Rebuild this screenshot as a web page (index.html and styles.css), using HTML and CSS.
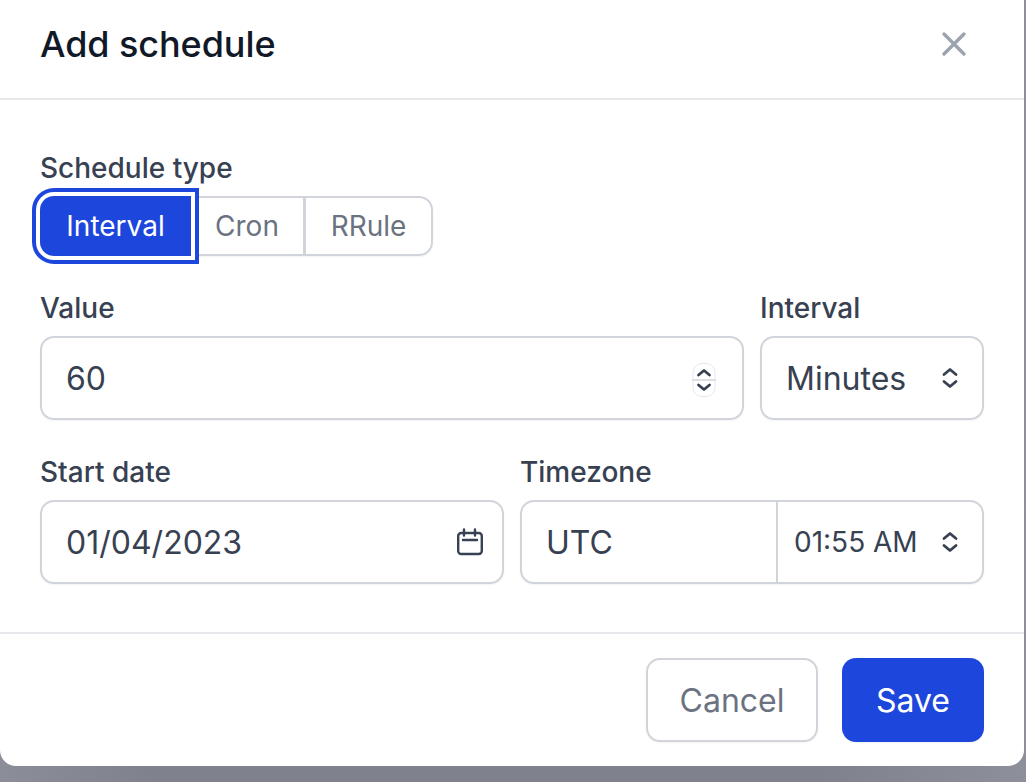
FILE: index.html
```html
<!DOCTYPE html>
<html lang="en">
<head>
    <meta charset="UTF-8">
    <meta name="viewport" content="width=device-width, initial-scale=1.0">
    <title>Add schedule</title>
    <link rel="stylesheet" href="styles.css">
</head>
<body>

<div class="modal">
    <div class="modal-header">
        <h2>Add schedule</h2>
        <button class="close-btn" aria-label="Close">
            <svg width="28" height="28" viewBox="0 0 28 28" fill="none" stroke="#9ca3af" stroke-width="3.4" stroke-linecap="round">
                <path d="M4 4L24 24M24 4L4 24"/>
            </svg>
        </button>
    </div>

    <div class="modal-body">
        <div class="form-group">
            <label>Schedule type</label>
            <div class="btn-group">
                <button class="seg seg-active">Interval</button>
                <button class="seg seg-cron">Cron</button>
                <button class="seg seg-rrule">RRule</button>
            </div>
        </div>

        <div class="form-row row-value">
            <div class="form-group">
                <label for="value">Value</label>
                <div class="field">
                    <input type="text" id="value" value="60">
                    <div class="spinner">
                        <svg width="24" height="34" viewBox="0 0 24 34" fill="none" stroke="#374151" stroke-width="2.8" stroke-linecap="round" stroke-linejoin="round">
                            <rect x="1" y="0.5" width="22" height="33" rx="9" fill="#fff" stroke="#e5e7eb" stroke-width="1"/>
                            <path d="M1 17H23" stroke="#d1d5db" stroke-width="1.5"/>
                            <path d="M6.5 12L12 7.5L17.5 12"/>
                            <path d="M6.5 22L12 26.5L17.5 22"/>
                        </svg>
                    </div>
                </div>
            </div>
            <div class="form-group">
                <label>Interval</label>
                <div class="field">
                    <span class="field-text">Minutes</span>
                    <svg width="16" height="22" viewBox="0 0 16 22" fill="none" stroke="#374151" stroke-width="2.8" stroke-linecap="round" stroke-linejoin="round">
                        <path d="M2 7.5L8 2.5L14 7.5"/>
                        <path d="M2 14.5L8 19.5L14 14.5"/>
                    </svg>
                </div>
            </div>
        </div>

        <div class="form-row row-date">
            <div class="form-group">
                <label for="start">Start date</label>
                <div class="field">
                    <input type="text" id="start" value="01/04/2023">
                    <svg class="calendar" width="28" height="28" viewBox="0 0 28 28" fill="none" stroke="#374151" stroke-width="2.4" stroke-linecap="round" stroke-linejoin="round">
                        <rect x="2.2" y="5" width="23.6" height="21" rx="3"/>
                        <path d="M8 1.5V7.5M19 1.5V7.5M7 12H21"/>
                    </svg>
                </div>
            </div>
            <div class="form-group">
                <label>Timezone</label>
                <div class="field tz-field">
                    <span class="field-text tz-name">UTC</span>
                    <div class="tz-time">
                        <span>01:55 AM</span>
                        <svg width="16" height="22" viewBox="0 0 16 22" fill="none" stroke="#374151" stroke-width="2.8" stroke-linecap="round" stroke-linejoin="round">
                            <path d="M2 7.5L8 2.5L14 7.5"/>
                            <path d="M2 14.5L8 19.5L14 14.5"/>
                        </svg>
                    </div>
                </div>
            </div>
        </div>
    </div>

    <div class="modal-footer">
        <button class="btn btn-cancel">Cancel</button>
        <button class="btn btn-save">Save</button>
    </div>
</div>

</body>
</html>
```

FILE: styles.css
```css
* {
    box-sizing: border-box;
}
html, body {
    height: 100%;
}
body {
    font-family: Inter, "Liberation Sans", sans-serif;
    background: linear-gradient(90deg, #8b8e99 0%, #7f828c 15%, #7f828c 80%, #8d909b 100%);
    margin: 0;
    overflow: hidden;
}
.modal {
    width: 1024px;
    height: 766px;
    background-color: #fff;
    border-radius: 0 0 16px 16px;
}
.modal-header {
    height: 100px;
    padding: 0 40px;
    border-bottom: 2px solid #e5e7eb;
    display: flex;
    align-items: center;
    justify-content: space-between;
}
.modal-header h2 {
    margin: -10px 0 0;
    font-size: 36px;
    line-height: 44px;
    font-weight: 500;
    letter-spacing: -0.08px;
    color: #111827;
}
.close-btn {
    width: 28px;
    height: 28px;
    margin: -10px 16px 0 0;
    padding: 0;
    background: none;
    border: none;
    display: flex;
}
.modal-body {
    padding: 52px 40px 0;
    height: 534px;
    border-bottom: 2px solid #e5e7eb;
}
label {
    display: block;
    font-size: 28px;
    line-height: 32px;
    font-weight: 500;
    color: #374151;
}
.btn-group {
    display: flex;
    width: 393px;
    height: 60px;
    margin-top: 12px;
    border: 2px solid #d1d5db;
    border-radius: 14px;
    box-shadow: 0 1px 2px rgba(0, 0, 0, 0.05);
}
.seg {
    border: none;
    background: none;
    padding: 0;
    font-family: inherit;
    font-size: 28px;
    color: #6b7280;
}
.seg-active {
    width: 151px;
    height: 60px;
    margin: -2px 0 0 -2px;
    color: #fff;
    background-color: #1d46dc;
    border-radius: 14px 0 0 14px;
    box-shadow: 0 0 0 4px #fff, 0 0 0 8px #1d46dc;
}
.seg-cron {
    width: 115px;
    border-right: 3px solid #d1d5db;
}
.seg-rrule {
    flex: 1;
}
.form-row {
    display: grid;
    gap: 16px;
}
.row-value {
    grid-template-columns: 704px 224px;
    margin-top: 36px;
}
.row-date {
    grid-template-columns: 464px 464px;
    margin-top: 36px;
}
.field {
    height: 84px;
    margin-top: 12px;
    padding: 0 24px;
    display: flex;
    align-items: center;
    justify-content: space-between;
    border: 2px solid #d1d5db;
    border-radius: 14px;
    box-shadow: 0 1px 2px rgba(0, 0, 0, 0.05);
    background-color: #fff;
}
.field input {
    flex: 1;
    min-width: 0;
    padding: 0;
    border: none;
    outline: none;
    font-family: inherit;
    font-size: 32px;
    color: #374151;
}
.field-text {
    font-size: 32px;
    color: #374151;
}
.spinner {
    display: flex;
    margin: 4px 2px 0 0;
}
.calendar {
    margin-right: -6px;
}
.tz-field {
    padding: 0;
}
.tz-name {
    width: 254px;
    padding-left: 24px;
}
.tz-time {
    flex: 1;
    height: 100%;
    padding: 0 24px 0 16px;
    border-left: 2px solid #d1d5db;
    display: flex;
    align-items: center;
    justify-content: space-between;
    font-size: 28px;
    color: #374151;
}
.modal-footer {
    padding: 24px 40px 0;
    display: flex;
    justify-content: flex-end;
    gap: 24px;
}
.btn {
    height: 84px;
    border-radius: 14px;
    font-family: inherit;
    font-size: 32px;
    padding: 0;
}
.btn-cancel {
    width: 172px;
    background-color: #fff;
    border: 2px solid #d1d5db;
    color: #6b7280;
    box-shadow: 0 1px 2px rgba(0, 0, 0, 0.05);
}
.btn-save {
    width: 142px;
    background-color: #1d46dc;
    border: none;
    color: #fff;
    box-shadow: 0 1px 2px rgba(0, 0, 0, 0.05);
}
```
